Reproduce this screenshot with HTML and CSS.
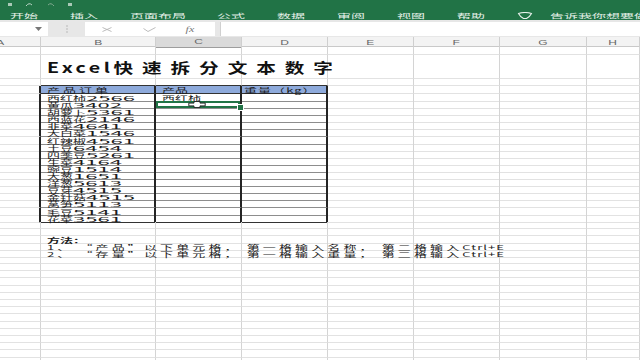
FILE: index.html
```html
<!DOCTYPE html>
<html lang="zh-CN">

<head>
    <meta charset="UTF-8">
    <meta name="viewport" content="width=device-width, initial-scale=1.0">
    <title>Excel快速拆分文本数字</title>
    <link rel="stylesheet" href="styles.css">
    <script>
        window.onload = function () {
            var oSheet = document.getElementById('sheet');
            var orders = ['西红柿2566', '黄瓜3402', '胡萝卜5361', '西蓝花2146', '韭菜4641', '大白菜1546',
                '红辣椒4561', '土豆6454', '四季豆5261', '生菜4164', '豌豆1514', '大葱1651',
                '洋葱5613', '豆芽4515', '金针菇4515', '莴笋5113', '毛豆5141', '花菜3561'];

            var rows = [
                { h: 8 },
                { h: 24, cells: { 1: '<span class="sx title"><span class="en">Excel</span>快速拆分文本数字</span>' } },
                { h: 7, cls: 'pre' },
                { h: 8, cls: 'tbl thead', cells: { 1: '产品订单', 2: '产品', 3: '重量（<span class="en">kg</span>）' } }
            ];

            for (var i = 0; i < orders.length; i++) {
                // digits sit at the end of each order, they are drawn wider
                var order = orders[i].replace(/(\d+)/, '<span class="num">$1</span>');
                rows.push({ h: 7.1, cls: i === orders.length - 1 ? 'tbl last' : 'tbl', cells: { 1: order } });
            }
            rows[4].cells[2] = '西红柿';
            rows[5].sel = true;

            rows.push({ h: 7.1 }, { h: 7.1 });
            rows.push({ h: 7, cells: { 1: '<span class="sx bold">方法：</span>' } });
            rows.push({ h: 7, cells: { 1: '<span class="sx note">1、 “产品”以下单元格， 第一格输入名称， 第二格输入<span class="en">Ctrl+E</span></span>' } });
            rows.push({ h: 7, cells: { 1: '<span class="sx note">2、 “存量”以下单元格， 第一格输入重量， 第二格输入<span class="en">Ctrl+E</span></span>' } });
            for (var k = 0; k < 16; k++) {
                rows.push({ h: 7.2 });
            }

            for (var r = 0; r < rows.length; r++) {
                var oRow = document.createElement('div');
                oRow.className = 'row' + (rows[r].cls ? ' ' + rows[r].cls : '');
                oRow.style.height = rows[r].h + 'px';

                for (var c = 0; c < 8; c++) {
                    var oCell = document.createElement('div');
                    oCell.className = 'cell';
                    var text = rows[r].cells && rows[r].cells[c];
                    if (text) {
                        oCell.innerHTML = text.indexOf('class="sx') > -1 ? text : '<span class="sx">' + text + '</span>';
                    }
                    if (rows[r].sel && c === 2) {
                        oCell.className = 'cell sel';
                        oCell.innerHTML = '<svg class="pointer" width="18" height="7" viewBox="0 0 18 8" preserveAspectRatio="none">' +
                            '<path d="M6 0.6 H12 V2.4 H17.2 V5.6 H12 V7.4 H6 V5.6 H0.8 V2.4 H6 Z" fill="#fff" stroke="#222" stroke-width="1"/></svg>';
                    }
                    oRow.appendChild(oCell);
                }
                oSheet.appendChild(oRow);
            }
        };
    </script>
</head>

<body>
    <div class="ribbon">
        <div class="qat">
            <span class="qdot"></span>
            <svg width="10" height="5" viewBox="0 0 10 5"><path d="M2 4 Q5 0 8 3" fill="none" stroke="#bcd6c6" stroke-width="1"/></svg>
            <svg width="10" height="5" viewBox="0 0 10 5"><path d="M8 4 Q5 0 2 3" fill="none" stroke="#7fa98f" stroke-width="1"/></svg>
            <span class="qdot"></span>
        </div>
        <div class="tabs">
            <div class="tab"><span class="sx">开始</span></div>
            <div class="tab"><span class="sx">插入</span></div>
            <div class="tab w4"><span class="sx">页面布局</span></div>
            <div class="tab"><span class="sx">公式</span></div>
            <div class="tab"><span class="sx">数据</span></div>
            <div class="tab"><span class="sx">审阅</span></div>
            <div class="tab"><span class="sx">视图</span></div>
            <div class="tab"><span class="sx">帮助</span></div>
            <div class="tell">
                <svg width="16" height="8" viewBox="0 0 16 8">
                    <path d="M1.5 1.5 Q8 -0.5 14.5 1.5 Q13 4.5 9.5 6.5 H6.5 Q3 4.5 1.5 1.5 Z" fill="none" stroke="#e6f0ea" stroke-width="1.1"/>
                </svg>
                <span class="sx">告诉我你想要做什么</span>
            </div>
        </div>
    </div>

    <div class="fbar">
        <div class="namebox">
            <svg width="7" height="4" viewBox="0 0 7 4"><path d="M0 0 H7 L3.5 4 Z" fill="#777"/></svg>
        </div>
        <div class="vdots">
            <svg width="2" height="8" viewBox="0 0 2 8"><circle cx="1" cy="1" r="0.7" fill="#aaa"/><circle cx="1" cy="4" r="0.7" fill="#aaa"/><circle cx="1" cy="7" r="0.7" fill="#aaa"/></svg>
        </div>
        <div class="fbtns">
            <svg width="10" height="5" viewBox="0 0 10 5"><path d="M0.5 0.5 L9.5 4.5 M9.5 0.5 L0.5 4.5" stroke="#b4b4b4" stroke-width="0.9"/></svg>
            <svg width="13" height="5" viewBox="0 0 13 5"><path d="M0.5 1.5 L5 4.5 L12.5 0.5" fill="none" stroke="#b4b4b4" stroke-width="0.9"/></svg>
            <span class="fx">fx</span>
        </div>
        <div class="finput"></div>
    </div>

    <div class="colhead">
        <div class="ch first"><span class="sx">A</span></div>
        <div class="ch"><span class="sx">B</span></div>
        <div class="ch on"><span class="sx">C</span></div>
        <div class="ch"><span class="sx">D</span></div>
        <div class="ch"><span class="sx">E</span></div>
        <div class="ch"><span class="sx">F</span></div>
        <div class="ch"><span class="sx">G</span></div>
        <div class="ch"><span class="sx">H</span></div>
    </div>

    <div id="sheet" class="sheet"></div>
</body>

</html>
```

FILE: styles.css
```css
* {
    padding: 0;
    margin: 0;
    box-sizing: border-box;
}

body {
    width: 640px;
    height: 360px;
    overflow: hidden;
    background-color: #fff;
    font-family: "Noto Sans CJK SC", "Liberation Sans", sans-serif;
    color: #1c1c1c;
}

/* the capture is stretched: wide, flat text */
.sx {
    display: inline-block;
    white-space: nowrap;
    line-height: 1;
    font-size: 10px;
    transform: scale(1.3, 0.68);
    transform-origin: 0 50%;
}

.num {
    display: inline-block;
    transform: scaleX(1.7);
    transform-origin: 0 50%;
}

/* ribbon */
.ribbon {
    height: 20px;
    overflow: hidden;
    background-color: #217346;
}

.qat {
    height: 9px;
    display: flex;
    align-items: center;
    gap: 12px;
    padding-left: 8px;
}

.qdot {
    width: 4px;
    height: 3px;
    background-color: #a9c9b6;
}

.tabs {
    height: 11px;
    display: flex;
    align-items: center;
    gap: 33px;
    padding-left: 10px;
    padding-top: 2px;
}

.tab {
    width: 28px;
    display: flex;
    align-items: center;
}

.tab.w4 {
    width: 56px;
}

.tabs .sx {
    color: #e3efe7;
    transform: scale(1.4, 0.62);
}

.tell {
    display: flex;
    align-items: center;
    gap: 17px;
}

/* formula bar */
.fbar {
    height: 17px;
    display: flex;
    padding: 2px 0 1px;
    background-color: #e7e7e7;
}

.namebox {
    width: 48px;
    display: flex;
    align-items: center;
    justify-content: flex-end;
    padding-right: 6px;
    background-color: #fff;
}

.vdots {
    width: 37px;
    display: flex;
    align-items: center;
    justify-content: center;
}

.fbtns {
    width: 130px;
    display: flex;
    align-items: center;
    gap: 31px;
    padding-left: 17px;
    background-color: #fff;
}

.fx {
    font-family: "Liberation Serif", serif;
    font-style: italic;
    font-size: 8px;
    color: #777;
    transform: scaleX(1.5);
}

.finput {
    flex: 1;
    margin-left: 5px;
    border-left: 1px solid #d0d0d0;
    background-color: #fff;
}

/* column letters */
.colhead {
    height: 10px;
    display: grid;
    grid-template-columns: 41px 115px 86px 86px 86px 86px 87px 53px;
    background-color: #f3f3f3;
    border-bottom: 1px solid #c9c9c9;
}

.ch {
    display: flex;
    align-items: center;
    justify-content: center;
    border-right: 1px solid #cfcfcf;
}

.ch .sx {
    font-family: "Liberation Sans", sans-serif;
    color: #666;
    transform: scale(1.2, 0.72);
    transform-origin: 50% 50%;
}

.ch.first {
    justify-content: flex-start;
}

.ch.first .sx {
    margin-left: -3px;
}

.ch.on {
    background-color: #dadada;
    border-bottom: 1px solid #9d9d9d;
}

/* grid */
.row {
    display: grid;
    grid-template-columns: 41px 115px 86px 86px 86px 86px 87px 53px;
}

.cell {
    display: flex;
    align-items: center;
    padding-left: 6px;
    white-space: nowrap;
    border-right: 1px solid #d4d4d4;
    border-bottom: 1px solid #e2e2e2;
}

.cell .sx {
    line-height: 7px;
}

.cell .title {
    font-size: 14px;
    line-height: 1;
    font-weight: 700;
    letter-spacing: 6.4px;
    color: #111;
    transform: scaleX(1.4);
}

.title .en {
    letter-spacing: 2.5px;
}

.bold {
    font-weight: 700;
}

.note {
    letter-spacing: 2.4px;
}

.note .en {
    letter-spacing: 0.8px;
}

/* the product table B4:D22 */
.pre .cell:nth-child(n+2):nth-child(-n+4) {
    border-bottom-color: #333;
}

.tbl .cell:nth-child(-n+4) {
    border-right: 2px solid #242424;
}

.tbl .cell:nth-child(n+2):nth-child(-n+4) {
    border-bottom-color: #8d8d8d;
}

.tbl.last .cell:nth-child(n+2):nth-child(-n+4),
.thead .cell:nth-child(n+2):nth-child(-n+4) {
    border-bottom-color: #333;
}

.thead .cell:nth-child(n+2):nth-child(-n+4) {
    background-color: #8eaadb;
}

.thead .sx {
    letter-spacing: 2.3px;
}

.thead .cell:nth-child(3) .sx {
    letter-spacing: 0;
}

.thead .cell:nth-child(4) {
    padding-left: 2px;
}

.thead .cell:nth-child(4) .sx {
    letter-spacing: 0.8px;
}

.sel {
    position: relative;
    padding-left: 32px;
    box-shadow: inset 0 0 0 2px #217346;
}

.sel::after {
    content: "";
    position: absolute;
    right: -4px;
    bottom: -3px;
    width: 5px;
    height: 5px;
    background-color: #217346;
    border: 1px solid #fff;
}
```
